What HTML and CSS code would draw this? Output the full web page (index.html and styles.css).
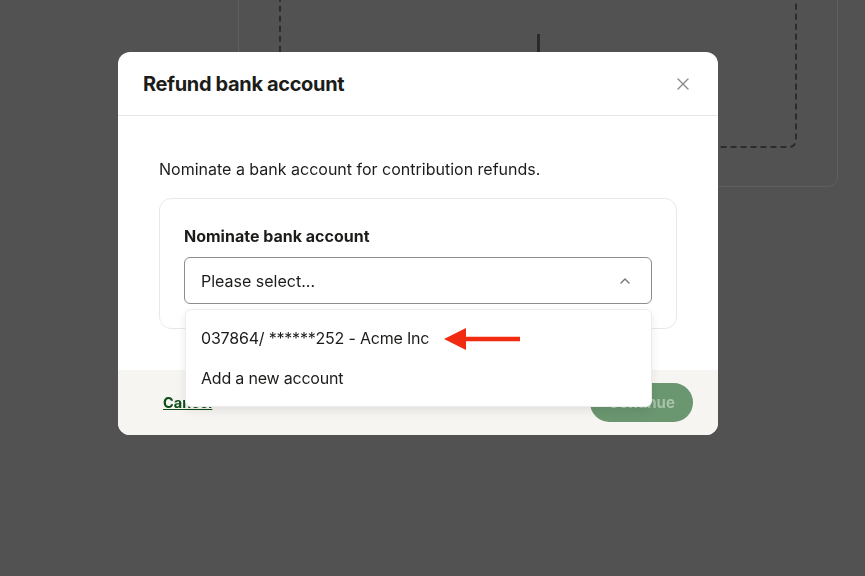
FILE: index.html
```html
<!DOCTYPE html>
<html lang="en">
<head>
    <meta charset="UTF-8">
    <meta name="viewport" content="width=device-width, initial-scale=1.0">
    <title>Refund bank account</title>
    <link rel="stylesheet" href="styles.css">
</head>
<body>
    <div class="page">
        <div class="upload-card">
            <div class="dropzone">
                <span class="dropzone-line"></span>
            </div>
        </div>
    </div>

    <div class="modal">
        <div class="modal-header">
            <h2 class="modal-title">Refund bank account</h2>
            <svg class="close-icon" width="12" height="12" viewBox="0 0 12 12">
                <path d="M1 1L11 11M11 1L1 11" stroke="#8a8a8a" stroke-width="1.4" stroke-linecap="round"/>
            </svg>
        </div>
        <div class="modal-body">
            <p class="intro">Nominate a bank account for contribution refunds.</p>
            <div class="field-card">
                <label class="field-label">Nominate bank account</label>
                <div class="select-wrap">
                    <div class="select">
                        <span>Please select...</span>
                        <svg width="12" height="8" viewBox="0 0 12 8">
                            <path d="M2 6L6 2L10 6" fill="none" stroke="#777" stroke-width="1.4" stroke-linecap="round" stroke-linejoin="round"/>
                        </svg>
                    </div>
                    <div class="dropdown">
                        <div class="option">037864/ ******252 - Acme Inc</div>
                        <div class="option">Add a new account</div>
                        <svg class="pointer-arrow" width="78" height="24" viewBox="0 0 78 24">
                            <path d="M0 12L22 1V9.8H76V14.2H22V23Z" fill="#f12b0f"/>
                        </svg>
                    </div>
                </div>
            </div>
        </div>
        <div class="modal-footer">
            <a class="cancel-link" href="#">Cancel</a>
            <button class="continue-btn">Continue</button>
        </div>
    </div>
</body>
</html>
```

FILE: styles.css
```css
body {
    margin: 0;
    background-color: #525252;
    font-family: "Inter", "Liberation Sans", sans-serif;
    color: #1c1c1a;
    overflow: hidden;
}

.page {
    height: 576px;
}

/* Background content behind the overlay */
.upload-card {
    margin-left: 238px;
    margin-top: -20px;
    width: 600px;
    height: 207px;
    border: 1px solid #5f5f5f;
    border-radius: 10px;
    padding: 0 40px 0 40px;
    box-sizing: border-box;
}

.dropzone {
    height: 165px;
    border: 2px dashed #2c2c2c;
    border-top: none;
    border-radius: 0 0 8px 8px;
    position: relative;
}

.dropzone-line {
    position: absolute;
    left: 256px;
    top: 53px;
    width: 3px;
    height: 40px;
    background-color: #2a2a2a;
}

.modal {
    position: fixed;
    left: 118px;
    top: 52px;
    width: 600px;
    height: 383px;
    background-color: #fff;
    border-radius: 12px;
    display: flex;
    flex-direction: column;
}

.modal-header {
    display: flex;
    align-items: center;
    justify-content: space-between;
    height: 63px;
    padding: 0 29px 0 25px;
    border-bottom: 1px solid #e6e6e6;
}

.modal-title {
    margin: 0;
    font-size: 20px;
    font-weight: 700;
    letter-spacing: -0.35px;
}

.close-icon {
    margin-top: 1px;
}

.modal-body {
    padding: 41px;
}

.intro {
    margin: 0 0 17px 0;
    font-size: 16px;
    line-height: 24px;
}

.field-card {
    border: 1px solid #e8e8e8;
    border-radius: 12px;
    padding: 27px 24px 24px 24px;
}

.field-label {
    display: block;
    font-size: 16px;
    font-weight: 700;
    line-height: 20px;
    margin-bottom: 11px;
}

.select-wrap {
    position: relative;
}

.select {
    display: flex;
    align-items: center;
    justify-content: space-between;
    height: 45px;
    padding: 0 20px 0 16px;
    border: 1px solid #8c8c8c;
    border-radius: 6px;
    font-size: 16px;
}

.dropdown {
    position: absolute;
    left: 1px;
    right: 0;
    top: 52px;
    padding: 8px 0 8px 0;
    background-color: #fff;
    border: 1px solid #ececec;
    border-radius: 6px;
    box-shadow: 0 4px 10px rgba(0, 0, 0, 0.08);
    z-index: 2;
}

.option {
    height: 40px;
    line-height: 40px;
    padding: 0 15px;
    font-size: 16px;
    letter-spacing: -0.2px;
}

.pointer-arrow {
    position: absolute;
    left: 258px;
    top: 17px;
}

.modal-footer {
    flex: 1;
    display: flex;
    align-items: center;
    justify-content: space-between;
    padding: 0 25px 0 45px;
    background-color: #f6f5f2;
    border-radius: 0 0 12px 12px;
}

.cancel-link {
    color: #0f4d1a;
    font-weight: 700;
    font-size: 14.5px;
    text-decoration: underline;
}

.continue-btn {
    height: 39px;
    width: 103px;
    border: none;
    border-radius: 20px;
    background-color: #6a9670;
    color: #a8c3aa;
    font-family: inherit;
    font-size: 15px;
    font-weight: 700;
}
```
